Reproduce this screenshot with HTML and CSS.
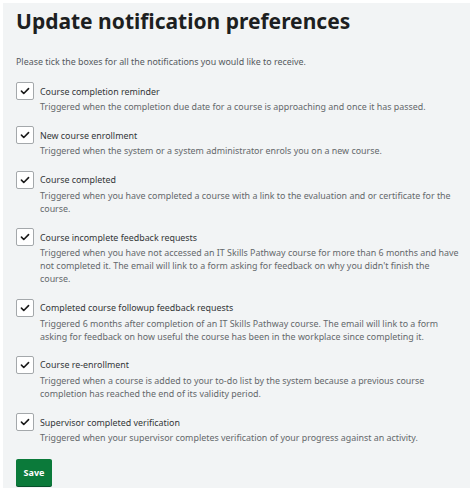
FILE: index.html
```html
<!DOCTYPE html>
<html lang="en">
<head>
<meta charset="utf-8">
<title>Update notification preferences</title>
<link rel="stylesheet" href="styles.css">
</head>
<body>
<main class="panel">
  <h1 class="title">Update notification preferences</h1>
  <p class="intro">Please tick the boxes for all the notifications you would like to receive.</p>
  <form class="prefs">
    <div class="item">
      <label class="row"><span class="box"><svg viewBox="0 0 18 18"><path d="M5 9.2l2.6 2.6L13 6.3"/></svg></span><span class="label">Course completion reminder</span></label>
      <p class="desc">Triggered when the completion due date for a course is approaching and once it has passed.</p>
    </div>
    <div class="item">
      <label class="row"><span class="box"><svg viewBox="0 0 18 18"><path d="M5 9.2l2.6 2.6L13 6.3"/></svg></span><span class="label">New course enrollment</span></label>
      <p class="desc">Triggered when the system or a system administrator enrols you on a new course.</p>
    </div>
    <div class="item">
      <label class="row"><span class="box"><svg viewBox="0 0 18 18"><path d="M5 9.2l2.6 2.6L13 6.3"/></svg></span><span class="label">Course completed</span></label>
      <p class="desc">Triggered when you have completed a course with a link to the evaluation and or certificate for the course.</p>
    </div>
    <div class="item">
      <label class="row"><span class="box"><svg viewBox="0 0 18 18"><path d="M5 9.2l2.6 2.6L13 6.3"/></svg></span><span class="label">Course incomplete feedback requests</span></label>
      <p class="desc">Triggered when you have not accessed an IT Skills Pathway course for more than 6 months and have not completed it. The email will link to a form asking for feedback on why you didn't finish the course.</p>
    </div>
    <div class="item">
      <label class="row"><span class="box"><svg viewBox="0 0 18 18"><path d="M5 9.2l2.6 2.6L13 6.3"/></svg></span><span class="label">Completed course followup feedback requests</span></label>
      <p class="desc">Triggered 6 months after completion of an IT Skills Pathway course. The email will link to a form asking for feedback on how useful the course has been in the workplace since completing it.</p>
    </div>
    <div class="item">
      <label class="row"><span class="box"><svg viewBox="0 0 18 18"><path d="M5 9.2l2.6 2.6L13 6.3"/></svg></span><span class="label">Course re-enrollment</span></label>
      <p class="desc">Triggered when a course is added to your to-do list by the system because a previous course completion has reached the end of its validity period.</p>
    </div>
    <div class="item">
      <label class="row"><span class="box"><svg viewBox="0 0 18 18"><path d="M5 9.2l2.6 2.6L13 6.3"/></svg></span><span class="label">Supervisor completed verification</span></label>
      <p class="desc">Triggered when your supervisor completes verification of your progress against an activity.</p>
    </div>
    <button type="button" class="save">Save</button>
  </form>
</main>
</body>
</html>
```
FILE: styles.css
```css
* { box-sizing: border-box; }
html, body { margin: 0; padding: 0; background: #ffffff; }
body {
  font-family: "Noto Sans", "Open Sans", "DejaVu Sans", sans-serif;
  width: 474px;
  height: 493px;
  overflow: hidden;
}
.panel {
  margin: 3px 4px 0 3px;
  height: 485px;
  background: #f2f4f5;
  padding: 4px 4px 0 13px;
}
.title {
  margin: 0;
  font-size: 21px;
  line-height: 28px;
  font-weight: 700;
  color: #1d1f21;
  letter-spacing: 0;
}
.intro {
  margin: 20px 0 0;
  font-size: 8.9px;
  line-height: 14px;
  color: #555a5e;
}
.prefs {
  margin-top: 13px;
  display: flex;
  flex-direction: column;
}
.item { margin-bottom: 13.4px; }
.row {
  display: flex;
  align-items: center;
  gap: 6px;
  height: 18px;
}
.box {
  width: 18px;
  height: 18px;
  flex: none;
  background: #ffffff;
  border: 1px solid #a4a8ab;
  border-radius: 2px;
  display: flex;
  align-items: center;
  justify-content: center;
}
.box svg {
  width: 16px;
  height: 16px;
  fill: none;
  stroke: #1a1a1a;
  stroke-width: 1.8;
  stroke-linecap: round;
  stroke-linejoin: round;
}
.label {
  font-size: 8.9px;
  color: #333638;
}
.desc {
  margin: 0 0 0 24px;
  font-size: 8.9px;
  line-height: 13px;
  color: #64686b;
  max-width: 420.5px;
}
.save {
  align-self: flex-start;
  margin-top: 1px;
  width: 36px;
  height: 27px;
  padding: 0;
  border: 0;
  border-radius: 2px;
  background: #0b7a3a;
  box-shadow: 0 1px 0 #06502a;
  color: #ffffff;
  font-family: inherit;
  font-size: 9px;
  font-weight: 700;
}
```
